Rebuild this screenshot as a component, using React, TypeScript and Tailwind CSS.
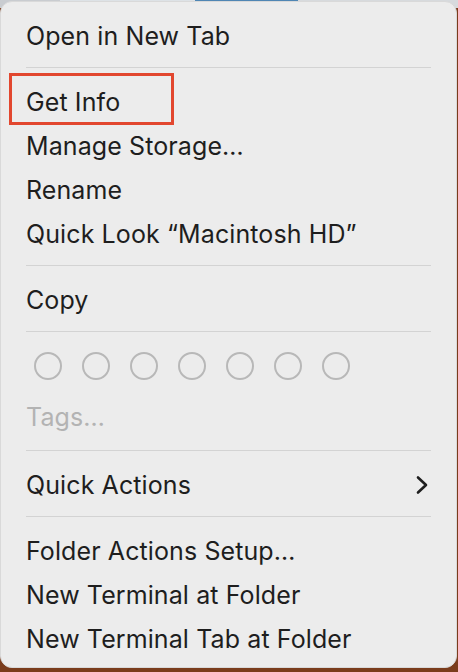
import React from 'react';

const Item = ({ label, muted, chevron }: { label: string; muted?: boolean; chevron?: boolean }) => (
  <div className="flex h-[44px] items-center justify-between pl-[25px] pr-[27px]">
    <span className={muted ? 'text-[#b3b3b3]' : 'text-[#1e1e1e]'}>{label}</span>
    {chevron && (
      <svg width="14" height="20" viewBox="0 0 14 20" fill="none">
        <path d="M3 2.5 L11 10 L3 17.5" stroke="#1e1e1e" strokeWidth="2.6" strokeLinecap="round" strokeLinejoin="round" />
      </svg>
    )}
  </div>
);

const Separator = ({ tall }: { tall?: boolean }) => (
  <div className={tall ? 'h-[24px] px-[25px] pt-[11px]' : 'h-[22px] px-[25px] pt-[9px]'}>
    <div className="h-px w-full bg-[#d3d3d3]" />
  </div>
);

export default function App() {
  return (
    <div className="relative flex h-[672px] w-[458px] flex-col overflow-hidden bg-[#7a3c1c]">
      {/* backdrop strip above the menu */}
      <div className="absolute left-0 right-0 top-0 flex h-[8px]">
        <div className="w-[60px] bg-[#c9ccd0]" />
        <div className="w-[135px] bg-[#dde2e6]" />
        <div className="w-[103px] bg-[#4f86b4]" />
        <div className="flex-1 bg-[#d7dadd]" />
      </div>

      <div
        className="relative mt-px flex h-[667px] w-[457px] flex-col rounded-[12px] border border-[#d9d9d9] bg-[#ececec] pt-[12px]"
        style={{ fontFamily: 'Inter, "Noto Sans", sans-serif' }}
      >
        <div className="flex flex-col text-[25px] leading-none tracking-[0.1px]">
          <Item label="Open in New Tab" />
          <Separator />
          <Item label="Get Info" />
          <Item label="Manage Storage…" />
          <Item label="Rename" />
          <Item label="Quick Look “Macintosh HD”" />
          <Separator />
          <Item label="Copy" />
          <Separator />
          <div className="flex h-[51px] gap-[20px] pl-[33px] pt-[8px]">
            {Array.from({ length: 7 }).map((_, i) => (
              <div key={i} className="h-[28px] w-[28px] rounded-full border-[2px] border-[#b8b8b8]" />
            ))}
          </div>
          <Item label="Tags…" muted />
          <Separator tall />
          <Item label="Quick Actions" chevron />
          <Separator />
          <Item label="Folder Actions Setup…" />
          <Item label="New Terminal at Folder" />
          <Item label="New Terminal Tab at Folder" />
        </div>

        {/* annotation highlight */}
        <div className="absolute left-[8px] top-[71px] h-[52px] w-[165px] border-[3px] border-[#e2472f]" />
      </div>
    </div>
  );
}
